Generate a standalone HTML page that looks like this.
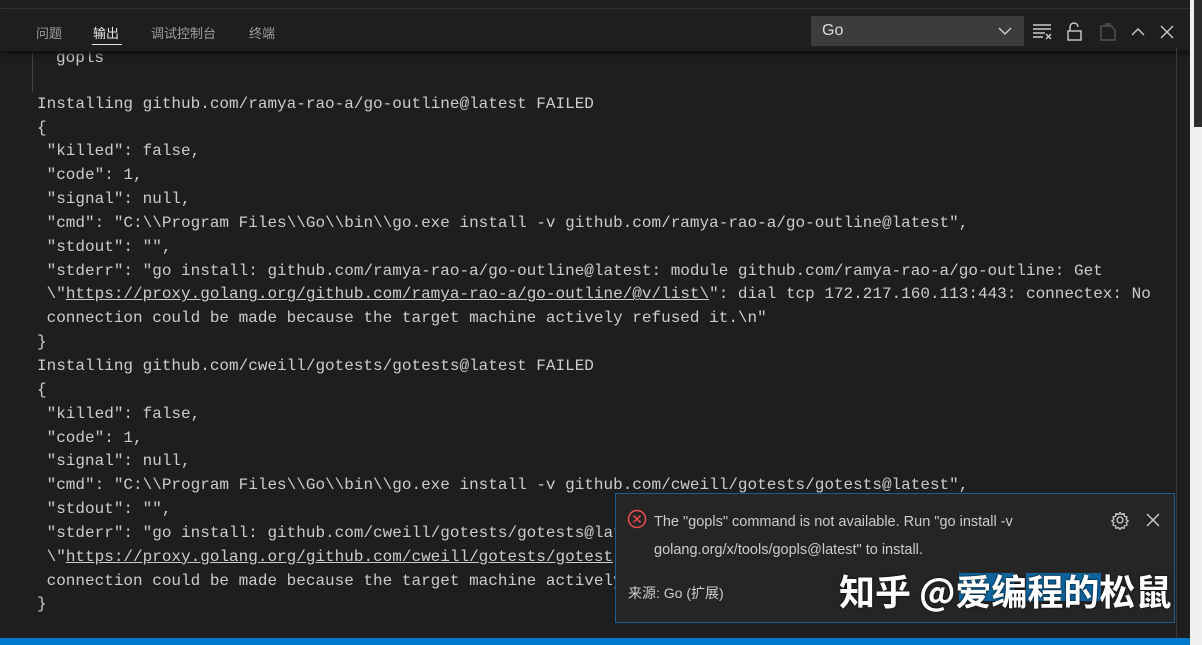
<!DOCTYPE html>
<html><head><meta charset="utf-8"><style>
body{margin:0;width:1202px;height:645px;overflow:hidden;background:#1e1e1e;position:relative;font-family:"Liberation Sans","Noto Sans CJK SC",sans-serif}
.top{position:absolute;left:0;top:0;width:1190px;height:8px;background:#1e1e1e;border-bottom:1px solid #333}
.tabs{position:absolute;left:0;top:9px;width:1190px;height:42px;background:#1e1e1e;box-shadow:0 3px 4px #111}
.tab{position:absolute;top:14px;font-size:13px;color:#9d9d9d}
.out{position:absolute;left:37px;top:45px;font-family:"Liberation Mono",monospace;font-size:16px;line-height:23.85px;color:#cccccc;white-space:pre}
.right{position:absolute;left:1190px;top:0;width:12px;height:645px;background:#f0f0f0}
.thumb{position:absolute;left:1194px;top:0;width:8px;height:127px;background:#2b2b2b}
.status{position:absolute;left:0;top:638px;width:1190px;height:7px;background:#007acc}
.sel{position:absolute;left:811px;top:16px;width:213px;height:30px;background:#3c3c3c;color:#ddd;font-size:16px}
.notif{position:absolute;left:615px;top:493px;width:558px;height:128px;border:1px solid #1a5f93;background:#252526;color:#ccc;font-size:14.5px}
u{text-decoration:underline}
</style></head><body>
<div class="top"></div>
<div class="out">

Installing github.com/ramya-rao-a/go-outline@latest FAILED
{
 "killed": false,
 "code": 1,
 "signal": null,
 "cmd": "C:\\Program Files\\Go\\bin\\go.exe install -v github.com/ramya-rao-a/go-outline@latest",
 "stdout": "",
 "stderr": "go install: github.com/ramya-rao-a/go-outline@latest: module github.com/ramya-rao-a/go-outline: Get
 \"<u>https://proxy.golang.org/github.com/ramya-rao-a/go-outline/@v/list\</u>": dial tcp 172.217.160.113:443: connectex: No
 connection could be made because the target machine actively refused it.\n"
}
Installing github.com/cweill/gotests/gotests@latest FAILED
{
 "killed": false,
 "code": 1,
 "signal": null,
 "cmd": "C:\\Program Files\\Go\\bin\\go.exe install -v github.com/cweill/gotests/gotests@latest",
 "stdout": "",
 "stderr": "go install: github.com/cweill/gotests/gotests@latest
 \"<u>https://proxy.golang.org/github.com/cweill/gotests/gotest</u>
 connection could be made because the target machine actively
}</div>
<div style="position:absolute;left:56px;top:47px;font-family:'Liberation Mono',monospace;font-size:16px;line-height:23.85px;color:#ccc">gopls</div>
<div style="position:absolute;left:32px;top:52px;width:1px;height:40px;background:#444"></div>
<div class="tabs">
<span class="tab" style="left:36px">问题</span>
<span class="tab" style="left:93px;color:#e7e7e7">输出</span>
<div style="position:absolute;left:92px;top:35px;width:30px;height:1px;background:#e7e7e7"></div>
<span class="tab" style="left:151px">调试控制台</span>
<span class="tab" style="left:249px">终端</span>
</div>
<div class="sel"><span style="position:absolute;left:11px;top:6px">Go</span>
<svg style="position:absolute;left:186px;top:8px" width="16" height="14"><path d="M2 4l6 6 6-6" stroke="#ccc" fill="none" stroke-width="1.4"/></svg></div>
<svg style="position:absolute;left:1030px;top:20px" width="150" height="24" fill="none" stroke="#ccc" stroke-width="1.4">
<path d="M3 5h18M3 9h18M3 13h12M3 17h10M16 14l5 5M21 14l-5 5"/>
<rect x="38" y="11" width="13" height="9"/><path d="M40 11V7a4 4 0 0 1 8 0"/>
<path d="M71 6h10l4 4v10H71z M75 4h6" stroke="#555"/>
<path d="M102 15l6-6 6 6"/>
<path d="M131 6l12 12M143 6l-12 12"/>
</svg>
<div class="right"></div><div class="thumb"></div>
<div style="position:absolute;left:1176px;top:48px;width:1px;height:590px;background:#3a3a3a"></div>
<div class="status"></div>
<div class="notif">
<svg style="position:absolute;left:11px;top:15px" width="20" height="20"><circle cx="10" cy="10" r="8.5" stroke="#f14c4c" stroke-width="1.5" fill="none"/><path d="M6.5 6.5l7 7M13.5 6.5l-7 7" stroke="#f14c4c" stroke-width="1.5"/></svg>
<div style="position:absolute;left:38px;top:14px;line-height:28px">The "gopls" command is not available. Run "go install -v<br>golang.org/x/tools/gopls@latest" to install.</div>
<svg style="position:absolute;left:494px;top:16px" width="20" height="20" fill="none" stroke="#ccc" stroke-width="1.3"><circle cx="10" cy="10" r="3"/><path d="M10 2.5l1.5 2 2.5-.8.5 2.5 2.5.8-.8 2.5 2 1.5-2 1.5.8 2.5-2.5.8-.5 2.5-2.5-.8-1.5 2-1.5-2-2.5.8-.5-2.5-2.5-.8.8-2.5-2-1.5 2-1.5-.8-2.5 2.5-.8.5-2.5 2.5.8z"/></svg>
<svg style="position:absolute;left:529px;top:18px" width="16" height="16"><path d="M2 2l12 12M14 2L2 14" stroke="#ccc" stroke-width="1.4"/></svg>
<div style="position:absolute;left:12px;top:89px;font-size:14px">来源: Go (扩展)</div>
<div style="position:absolute;left:343px;top:79px;width:55px;height:28px;background:#0e639c"></div>
<div style="position:absolute;left:410px;top:79px;width:75px;height:28px;background:#0e639c"></div>
<div style="position:absolute;left:223px;top:76px;font-size:36px;font-weight:bold;color:#fff;font-family:'Noto Sans CJK SC',sans-serif;line-height:40px;text-shadow:0 0 2px #000">知乎 @爱编程的松鼠</div>
</div>
</body></html>
